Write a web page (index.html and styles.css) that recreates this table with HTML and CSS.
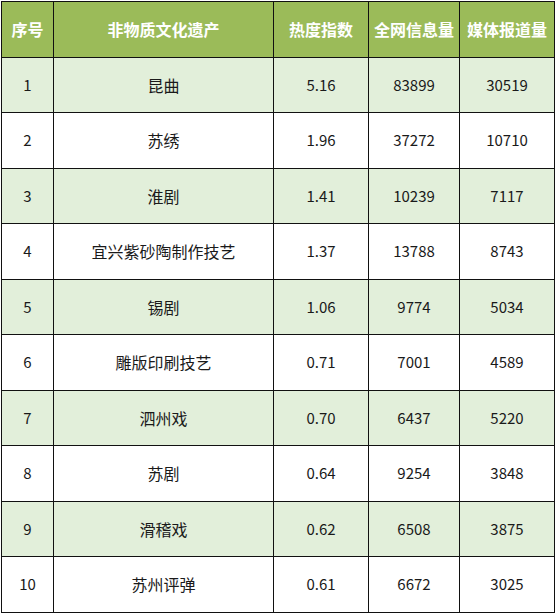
FILE: index.html
```html
<!DOCTYPE html>
<html lang="zh">
<head>
<meta charset="utf-8">
<link rel="stylesheet" href="styles.css">
</head>
<body>
<table class="data">
  <colgroup>
    <col class="c1"><col class="c2"><col class="c3"><col class="c4"><col class="c5">
  </colgroup>
  <thead>
    <tr><th>序号</th><th>非物质文化遗产</th><th>热度指数</th><th>全网信息量</th><th>媒体报道量</th></tr>
  </thead>
  <tbody>
    <tr class="alt"><td>1</td><td class="name">昆曲</td><td>5.16</td><td>83899</td><td>30519</td></tr>
    <tr><td>2</td><td class="name">苏绣</td><td>1.96</td><td>37272</td><td>10710</td></tr>
    <tr class="alt"><td>3</td><td class="name">淮剧</td><td>1.41</td><td>10239</td><td>7117</td></tr>
    <tr><td>4</td><td class="name">宜兴紫砂陶制作技艺</td><td>1.37</td><td>13788</td><td>8743</td></tr>
    <tr class="alt"><td>5</td><td class="name">锡剧</td><td>1.06</td><td>9774</td><td>5034</td></tr>
    <tr><td>6</td><td class="name">雕版印刷技艺</td><td>0.71</td><td>7001</td><td>4589</td></tr>
    <tr class="alt"><td>7</td><td class="name">泗州戏</td><td>0.70</td><td>6437</td><td>5220</td></tr>
    <tr><td>8</td><td class="name">苏剧</td><td>0.64</td><td>9254</td><td>3848</td></tr>
    <tr class="alt"><td>9</td><td class="name">滑稽戏</td><td>0.62</td><td>6508</td><td>3875</td></tr>
    <tr><td>10</td><td class="name">苏州评弹</td><td>0.61</td><td>6672</td><td>3025</td></tr>
  </tbody>
</table>
</body>
</html>
```
FILE: styles.css
```css
html, body {
  margin: 0;
  padding: 0;
  background: #ffffff;
}
body {
  padding: 1px 0 0 1px;
  font-family: "Noto Sans CJK SC", "Noto Sans", sans-serif;
}
.data {
  border-collapse: collapse;
  table-layout: fixed;
  width: 553px;
}
.c1 { width: 52px; }
.c2 { width: 220px; }
.c3 { width: 95px; }
.c4 { width: 91px; }
.c5 { width: 95px; }
.data th,
.data td {
  border: 1px solid #111;
  text-align: center;
  vertical-align: middle;
  padding: 0;
  height: 54.5px;
  line-height: 20px;
}
.data th {
  background: #9bbb59;
  color: #ffffff;
  font-weight: bold;
  font-size: 16px;
}
.data td {
  color: #1a1a1a;
  font-size: 15px;
  background: #ffffff;
}
.data td.name {
  font-size: 16px;
}
.data tr.alt td {
  background: #e2efda;
}
```
